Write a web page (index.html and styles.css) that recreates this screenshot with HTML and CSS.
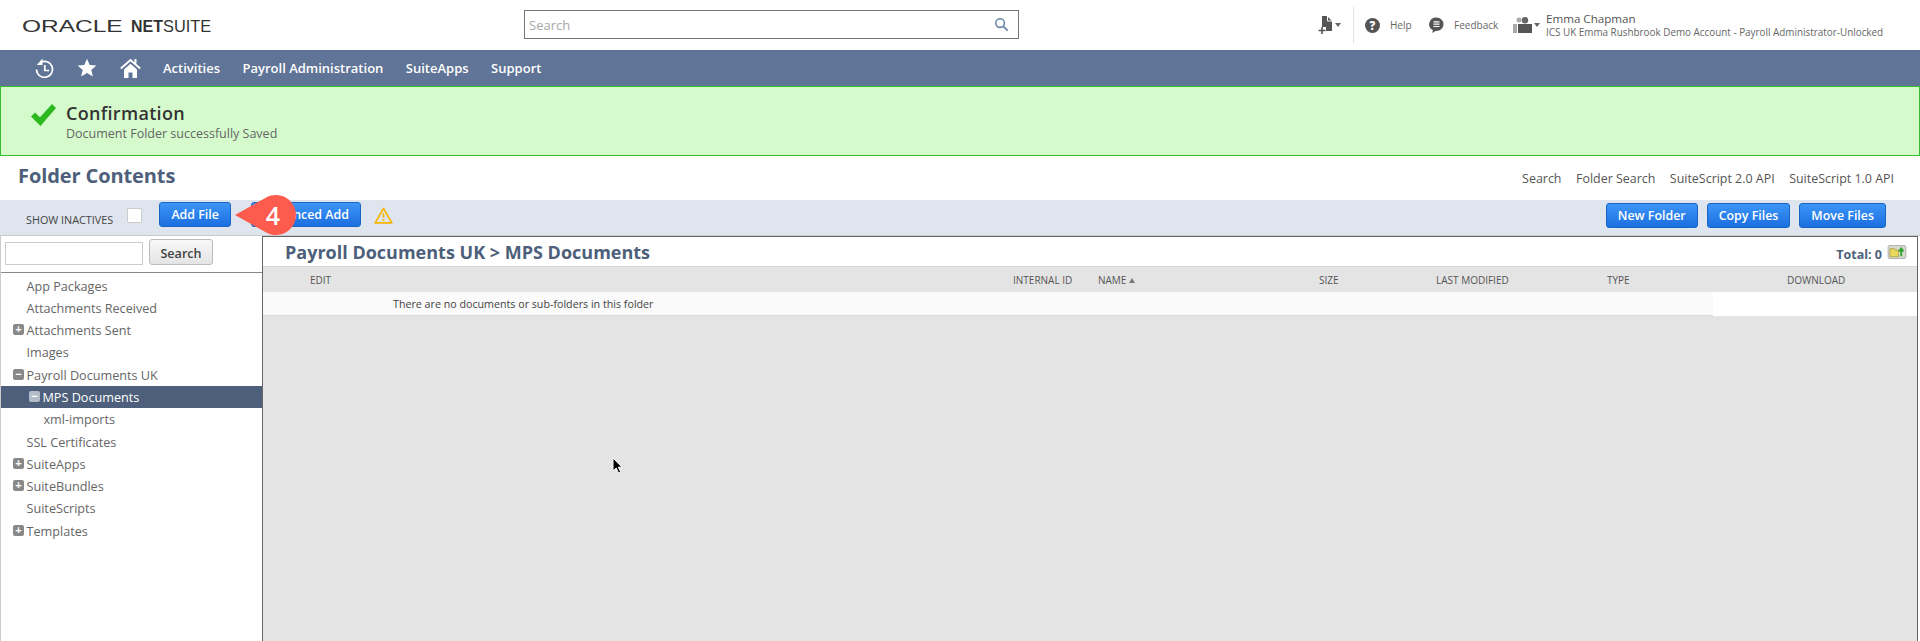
FILE: index.html
```html
<!DOCTYPE html>
<html lang="en">
<head>
<meta charset="utf-8">
<title>Folder Contents</title>
<link rel="stylesheet" href="styles.css">
</head>
<body>
<header class="top">
  <div class="logo"><span class="oracle">ORACLE</span><span class="net">NET</span><span class="suite">SUITE</span></div>
  <div class="gsearch"><span class="ph">Search</span>
    <svg class="mag" viewBox="0 0 16 16" width="15" height="15"><circle cx="6.5" cy="6.5" r="4.6" fill="none" stroke="#6d87a8" stroke-width="1.7"/><path d="M10 10l4.6 4.6" stroke="#6d87a8" stroke-width="2"/></svg>
  </div>
  <div class="tools">
    <div class="tool newdoc">
      <svg viewBox="0 0 15 18" width="15" height="18"><path d="M4 0h5l5 5v10H8v-4H4z" fill="#555"/><path d="M9.500 0v5h4.500" fill="none" stroke="#fff" stroke-width="1"/><path d="M4 11v7M0.500 14.500h7" stroke="#555" stroke-width="1.600"/></svg>
      <i class="caret"></i>
    </div>
    <div class="tool help">
      <span class="qmark">?</span><span class="tl">Help</span>
    </div>
    <div class="tool feedback">
      <svg viewBox="0 0 15 16" width="15" height="16"><path d="M7.500 0.500a7 6.700 0 0 1 0 13.400l-1 0L3.500 16l.2-3A7 6.700 0 0 1 7.500 0.500z" fill="#555"/><path d="M4.500 4.800h6M4.500 7.200h6M4.500 9.500h6" stroke="#fff" stroke-width="1.200"/></svg>
      <span class="tl">Feedback</span>
    </div>
    <div class="tool user">
      <svg viewBox="0 0 19 16" width="19" height="16"><circle cx="6" cy="3" r="2.500" fill="#aaa"/><circle cx="12" cy="3.200" r="3.200" fill="#666"/><rect x="0" y="7" width="4" height="9" fill="#aaa"/><rect x="5" y="7" width="14" height="9" fill="#555"/></svg>
      <i class="caret"></i>
      <div class="who"><div class="name">Emma Chapman</div><div class="acct">ICS UK Emma Rushbrook Demo Account - Payroll Administrator-Unlocked</div></div>
    </div>
  </div>
</header>

<nav class="nav">
  <svg class="ni clock" viewBox="0 0 19 20" width="19" height="20"><path d="M5.300 4.500A8 8 0 1 1 1.500 11.500" fill="none" stroke="#fff" stroke-width="1.700"/><path d="M7.500 0.500v6.500H1.800z" fill="#fff"/><path d="M9.800 7v5.500h4.400" fill="none" stroke="#fff" stroke-width="1.700"/></svg>
  <svg class="ni star" viewBox="0 0 20 20" width="20" height="20"><path d="M10 .8l2.700 6.200 6.700.6-5.100 4.400 1.600 6.600L10 15.100l-5.900 3.500 1.600-6.600L.6 7.600 7.300 7z" fill="#fff"/></svg>
  <svg class="ni home" viewBox="0 0 21 20" width="21" height="20"><path d="M.8 10.500L10.500 2l9.700 8.500M15.500 1v4.500" fill="none" stroke="#fff" stroke-width="2"/><path d="M4 11.500L10.500 5.800 17 11.500V20H12.500v-5.500h-4V20H4z" fill="#fff"/></svg>
  <a class="nl">Activities</a>
  <a class="nl">Payroll Administration</a>
  <a class="nl">SuiteApps</a>
  <a class="nl">Support</a>
</nav>

<section class="confirm">
  <svg class="check" viewBox="0 0 25 22" width="25" height="22"><path d="M0 12.500l4-4 5 4.800L21 0l4 4L9.500 22z" fill="#2cb91f"/></svg>
  <div><div class="ctitle">Confirmation</div><div class="cmsg">Document Folder successfully Saved</div></div>
</section>

<div class="titlerow">
  <h1>Folder Contents</h1>
  <div class="links"><a>Search</a><a>Folder Search</a><a>SuiteScript 2.0 API</a><a>SuiteScript 1.0 API</a></div>
</div>

<div class="toolbar">
  <span class="inactive">SHOW INACTIVES</span>
  <span class="cb"></span>
  <button class="btn addfile">Add File</button>
  <button class="btn adv">Advanced Add</button>
  <svg class="warn" viewBox="0 0 20 18" width="19" height="17"><path d="M10 1.500L18.800 16.800H1.200z" fill="none" stroke="#f7b500" stroke-width="1.800" stroke-linejoin="round"/><path d="M10 6.500v5M10 12.800v2" stroke="#f7b500" stroke-width="1.800"/></svg>
  <div class="tbright">
    <button class="btn">New Folder</button>
    <button class="btn">Copy Files</button>
    <button class="btn">Move Files</button>
  </div>
  <div class="callout">
    <svg viewBox="0 0 61 40" width="61" height="40"><path d="M0 20L31.200 2.540A20 20 0 1 1 31.200 37.460z" fill="#fc5b4e"/></svg>
    <span class="num">4</span>
  </div>
</div>

<div class="work">
  <aside class="side">
    <div class="sside"><span class="sinput"></span><button class="sbtn">Search</button></div>
    <ul class="tree">
      <li class="r">App Packages</li>
      <li class="r">Attachments Received</li>
      <li class="r"><i class="pm">+</i>Attachments Sent</li>
      <li class="r">Images</li>
      <li class="r"><i class="pm">&minus;</i>Payroll Documents UK</li>
      <li class="r sel"><i class="pm">&minus;</i>MPS Documents</li>
      <li class="r sub">xml-imports</li>
      <li class="r">SSL Certificates</li>
      <li class="r"><i class="pm">+</i>SuiteApps</li>
      <li class="r"><i class="pm">+</i>SuiteBundles</li>
      <li class="r">SuiteScripts</li>
      <li class="r"><i class="pm">+</i>Templates</li>
    </ul>
  </aside>
  <main class="panel">
    <div class="phead">
      <h2>Payroll Documents UK &gt; MPS Documents</h2>
      <div class="total"><span class="ttext">Total: 0</span>
        <svg viewBox="0 0 20 15" width="20" height="14"><rect x=".5" y=".5" width="19" height="14" rx="2" fill="#d9d9d0" stroke="#aaa"/><path d="M2.500 4h5l1 1.500h3v7h-9z" fill="#e8d860" stroke="#a89a30" stroke-width=".8"/><path d="M14.500 12V5M12 7l2.500-3.500L17 7" fill="none" stroke="#2fa52f" stroke-width="2"/></svg>
      </div>
    </div>
    <div class="cols">
      <span class="c1">EDIT</span><span class="c2">INTERNAL ID</span><span class="c3">NAME <i class="up"></i></span><span class="c4">SIZE</span><span class="c5">LAST MODIFIED</span><span class="c6">TYPE</span><span class="c7">DOWNLOAD</span>
    </div>
    <div class="empty">
      <div class="msg">There are no documents or sub-folders in this folder</div>
      <div class="white"></div>
    </div>
  </main>
</div>
<svg class="cursor" viewBox="0 0 12 18" width="12" height="18"><path d="M1 1v13l3.200-3 2.300 5 2.200-1-2.300-4.800H10z" fill="#000" stroke="#fff" stroke-width="1"/></svg>
</body>
</html>
```

FILE: styles.css
```css
* { box-sizing: border-box; }
html, body { margin: 0; height: 641px; overflow: hidden; }
body { position: relative; background: #fff; font-family: "Open Sans", sans-serif; color: #555; font-size: 13px; }
h1, h2 { margin: 0; }
ul { list-style: none; margin: 0; padding: 0; }

.top { height: 50px; display: flex; align-items: center; position: relative; background: #fff; }
.logo { margin: 3px 0 0 22px; display: flex; color: #333; white-space: nowrap; font-family: "Liberation Sans", sans-serif; font-size: 17px; line-height: 20px; }
.logo span { display: block; transform-origin: left center; }
.oracle { width: 109px; transform: scaleX(1.44); }
.net { width: 32px; font-weight: 700; transform: scaleX(.94); }
.suite { width: 48px; transform: scaleX(.96); }
.gsearch { position: absolute; left: 524px; top: 10px; width: 495px; height: 29px; border: 1px solid #777; display: flex; align-items: center; justify-content: space-between; padding: 0 9px 0 4px; }
.ph { color: #a8a8a8; font-size: 13px; }
.tools { position: absolute; left: 1318px; top: 7px; height: 36px; display: flex; align-items: center; }
.tool { display: flex; align-items: center; }
.caret { display: inline-block; border-left: 3px solid transparent; border-right: 3px solid transparent; border-top: 4.500px solid #666; margin-left: 2px; }
.newdoc { width: 36px; height: 36px; border-right: 1px solid #e2e2e2; margin-right: 11px; }
.help { width: 64px; }
.qmark { width: 15px; height: 15px; border-radius: 50%; background: #555; color: #fff; font-weight: 800; font-size: 11.500px; line-height: 15px; text-align: center; margin-right: 10px; }
.tl { font-size: 10px; color: #666; }
.feedback { width: 84px; }
.feedback .tl { margin-left: 10px; }
.who { margin-left: 6px; }
.name { font-size: 11.600px; line-height: 14px; color: #555; }
.acct { font-size: 9.900px; line-height: 13px; color: #666; white-space: nowrap; }

.nav { height: 36px; background: #5f7496; display: flex; align-items: center; padding-left: 35px; }
.ni { margin-right: 23px; flex: none; }
.home { margin-right: 22px; }
.nl { color: #fff; font-size: 13px; font-weight: 600; margin-right: 22.500px; }

.confirm { height: 70px; background: #d5fbcd; border: 1px solid #36c02c; display: flex; align-items: flex-start; padding: 15px 0 0 30px; }
.check { margin: 2px 10px 0 0; flex: none; }
.ctitle { font-size: 18px; font-weight: 600; color: #333; line-height: 23px; letter-spacing: .3px; }
.cmsg { font-size: 12.500px; color: #666; line-height: 18px; }

.titlerow { height: 44px; display: flex; align-items: center; justify-content: space-between; padding: 0 26px 0 18px; }
h1 { font-size: 20px; font-weight: 700; color: #4d5f7a; letter-spacing: -.1px; padding-bottom: 5px; }
.links { display: flex; gap: 14.500px; font-size: 12.450px; color: #555; }

.toolbar { height: 35px; background: #dfe5ef; display: flex; align-items: center; padding: 0 34px 0 26px; position: relative; }
.inactive { font-size: 10.800px; color: #444; margin-top: 3px; }
.cb { width: 15px; height: 15px; background: #fff; border: 1px solid #ccc; margin: 0 0 4px 14px; border-radius: 1px; flex: none; }
.btn { height: 25px; border: 1px solid #1a66c4; border-radius: 3px; background: linear-gradient(#3d95f7, #1b6fe0); color: #fff; font: 600 12.400px "Open Sans", sans-serif; padding: 0 11px; white-space: nowrap; }
.addfile { margin: 0 0 6px 17px; width: 72px; padding: 0; }
.adv { margin: 0 0 6px 20px; width: 110px; padding: 0; }
.warn { margin: 0 0 5px 13px; }
.tbright { margin: 0 0 4px auto; display: flex; gap: 9px; }
.callout { position: absolute; left: 235px; top: -5px; width: 61px; height: 40px; }
.callout svg { display: block; }
.num { position: absolute; left: 26px; top: 0; width: 24px; text-align: center; color: #fff; font-weight: 600; font-size: 25px; line-height: 40px; }

.work { display: flex; height: 406px; border-top: 1px solid #c9c9c9; }
.side { width: 262px; border-left: 1px solid #ccc; flex: none; }
.sside { height: 37px; border-bottom: 1px solid #888; padding: 3px 0 0 4px; display: flex; gap: 6px; }
.sinput { width: 138px; height: 23px; margin-top: 3px; border: 1px solid #ccc; background: #fff; }
.sbtn { width: 64px; height: 26px; background: linear-gradient(#f8f8f8, #e4e4e4); border: 1px solid #bbb; border-radius: 3px; color: #444; font: 600 12.600px "Open Sans", sans-serif; padding: 2px 0 0; }
.tree { padding-top: 1.500px; }
.r { height: 22.300px; line-height: 22px; padding-left: 25.500px; font-size: 12.650px; color: #666; position: relative; white-space: nowrap; }
.pm { position: absolute; left: 12px; top: 5px; width: 11px; height: 11px; border-radius: 2px; background: #888; color: #fff; font: 700 11px/10px "Liberation Sans", sans-serif; text-align: center; }
.sel { background: #4d5f7a; color: #fff; padding-left: 41.500px; }
.sel .pm { left: 28px; background: #b4bcc9; }
.sub { padding-left: 42.500px; }

.panel { flex: 1; border: 1px solid #666; border-bottom: 0; margin-right: 2px; background: #e4e4e4; display: flex; flex-direction: column; }
.phead { height: 29px; background: #fff; display: flex; align-items: center; justify-content: space-between; padding: 0 10px 0 22px; }
h2 { font-size: 18px; font-weight: 700; color: #4d5f7a; }
.total { display: flex; align-items: center; gap: 5px; font-size: 12.500px; font-weight: 700; color: #4d5f7a; }
.ttext { margin-top: 5px; }
.cols { height: 25px; background: #e4e4e4; border-top: 1px solid #d8d8d8; position: relative; font-size: 10px; color: #555; }
.cols span { position: absolute; top: 6px; }
.c1 { left: 47px; } .c2 { left: 750px; } .c3 { left: 835px; } .c4 { left: 1056px; } .c5 { left: 1173px; } .c6 { left: 1344px; } .c7 { left: 1524px; }
.up { display: inline-block; border-left: 3px solid transparent; border-right: 3px solid transparent; border-bottom: 5px solid #777; vertical-align: 1px; }
.empty { display: flex; height: 25px; border-top: 1px solid #e8e8e8; }
.msg { width: 1450px; height: 24px; background: #fafafa; border-bottom: 1px solid #dcdcdc; padding-left: 130px; font-size: 10.700px; line-height: 24px; color: #444; }
.white { flex: 1; background: #fff; }

.cursor { position: absolute; left: 612px; top: 457px; }
```
